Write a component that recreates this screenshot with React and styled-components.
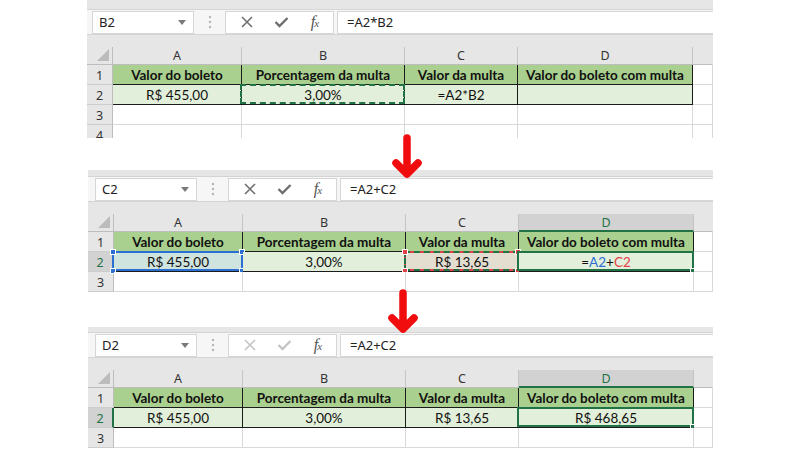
import React from "react";
import styled, { createGlobalStyle } from "styled-components";

const GlobalStyle = createGlobalStyle`
  html, body {
    margin: 0;
    padding: 0;
    background: #fff;
  }
  * {
    box-sizing: border-box;
  }
`;

const COLS = "26px 129px 163px 113px 175px 1fr";
const GREEN = "#217346";

const Page = styled.div`
  position: relative;
  width: 800px;
  height: 450px;
  overflow: hidden;
  background: #fff;
`;

const Panel = styled.div`
  margin-left: ${(p) => p.$left}px;
  margin-top: ${(p) => p.$top}px;
  width: ${(p) => 713 - p.$left}px;
  height: ${(p) => p.$height}px;
  overflow: hidden;
  background: #fff;
`;

const Band = styled.div`
  height: ${(p) => p.$h}px;
  background: #e6e6e6;
  border-bottom: 1px solid #d4d4d4;
`;

const FormulaStrip = styled.div`
  display: flex;
  align-items: center;
  height: 25px;
  padding-left: ${(p) => p.$pad}px;
  background: #f6f6f6;
  border-bottom: 1px solid #d4d4d4;
  font-family: "Noto Sans", "Open Sans", sans-serif;
  font-size: 13px;
  color: #222;
`;

const NameBox = styled.div`
  display: flex;
  align-items: center;
  justify-content: space-between;
  width: 102px;
  height: 23px;
  padding: 0 7px 0 6px;
  background: #fff;
  border: 1px solid #d6d6d6;
`;

const Dots = styled.div`
  display: flex;
  justify-content: center;
  width: 31px;
`;

const FxBox = styled.div`
  display: flex;
  align-items: center;
  justify-content: space-around;
  width: 109px;
  height: 23px;
  padding: 0 4px;
  background: #fff;
  border: 1px solid #d6d6d6;
`;

const Fx = styled.span`
  font-family: "Liberation Serif", "DejaVu Serif", serif;
  font-style: italic;
  font-size: 16px;
  line-height: 1;
  color: #555;
  letter-spacing: -1px;

  small {
    font-size: 11px;
  }
`;

const FormulaInput = styled.div`
  flex: 1;
  display: flex;
  align-items: center;
  height: 23px;
  margin-left: 3px;
  padding-left: 9px;
  background: #fff;
  border: 1px solid #d6d6d6;
  border-right: none;
`;

const HeaderGap = styled.div`
  height: 12px;
  background: #e6e6e6;
`;

const Grid = styled.div`
  display: grid;
  grid-template-columns: ${COLS};
  grid-template-rows: 18px;
  grid-auto-rows: 20px;
  font-family: Lato, "Liberation Sans", sans-serif;
`;

const Corner = styled.div`
  position: relative;
  background: #e6e6e6;
  border-right: 1px solid #bdbdbd;
  border-bottom: 1px solid #bdbdbd;
  overflow: hidden;

  &::after {
    content: "";
    position: absolute;
    right: 3px;
    bottom: 3px;
    border-style: solid;
    border-width: 0 0 12px 12px;
    border-color: transparent transparent #bcbcbc transparent;
  }
`;

const ColHead = styled.div`
  display: flex;
  align-items: center;
  justify-content: center;
  font-family: "Noto Sans", "Open Sans", sans-serif;
  font-size: 12.5px;
  color: ${(p) => (p.$active ? GREEN : "#333")};
  background: ${(p) => (p.$active ? "#d2d2d2" : "#e6e6e6")};
  border-right: 1px solid ${(p) => (p.$last ? "transparent" : "#c4c4c4")};
  border-bottom: ${(p) => (p.$active ? `2px solid ${GREEN}` : "1px solid #bdbdbd")};
`;

const RowHead = styled.div`
  display: flex;
  align-items: center;
  justify-content: center;
  padding-top: 1px;
  font-family: "Noto Sans", "Open Sans", sans-serif;
  font-size: 12.5px;
  color: ${(p) => (p.$active ? GREEN : "#333")};
  background: ${(p) => (p.$active ? "#d2d2d2" : "#e6e6e6")};
  border-right: ${(p) => (p.$active ? `2px solid ${GREEN}` : "1px solid #bdbdbd")};
  border-bottom: 1px solid #cdcdcd;
`;

const FILLS = {
  head: "#a9d08e",
  data: "#e2efda",
  blue: "#cfe3df",
  tan: "#e3ded0",
  none: "#fff",
};

const Cell = styled.div`
  position: relative;
  display: flex;
  align-items: center;
  justify-content: center;
  padding-top: 1px;
  font-size: 13.5px;
  font-weight: ${(p) => (p.$bold ? 700 : 400)};
  color: #111;
  white-space: nowrap;
  background: ${(p) => FILLS[p.$fill || "none"]};
  border-right: 1px solid ${(p) => (p.$boxed ? "#1b1b1b" : "#d9d9d9")};
  border-bottom: 1px solid ${(p) => (p.$boxed ? "#1b1b1b" : "#d9d9d9")};
`;

const Frame = styled.div`
  position: absolute;
  inset: -1px -1px 0 -2px;
  border: 2px ${(p) => p.$style || "solid"} ${(p) => p.$color};
  pointer-events: none;
`;

const Handle = styled.span`
  position: absolute;
  width: 6px;
  height: 6px;
  background: ${(p) => p.$color};
  border: 1px solid #fff;
  ${(p) => (p.$top ? "top: -3px;" : "bottom: -3px;")}
  ${(p) => (p.$left ? "left: -4px;" : "right: -3px;")}
`;

const Ref = styled.span`
  color: ${(p) => p.$color};
`;

const ArrowMark = styled.svg`
  position: absolute;
  left: ${(p) => p.$x}px;
  top: ${(p) => p.$y}px;
`;

const Caret = () => (
  <svg width="8" height="5" viewBox="0 0 8 5">
    <path d="M0 0 L8 0 L4 5 Z" fill="#7a7a7a" />
  </svg>
);

const VDots = () => (
  <svg width="4" height="14" viewBox="0 0 4 14">
    <circle cx="2" cy="2" r="1.2" fill="#b5b5b5" />
    <circle cx="2" cy="7" r="1.2" fill="#b5b5b5" />
    <circle cx="2" cy="12" r="1.2" fill="#b5b5b5" />
  </svg>
);

const Cross = ({ dim }) => (
  <svg width="12" height="12" viewBox="0 0 12 12">
    <path
      d="M1 1 L11 11 M11 1 L1 11"
      stroke={dim ? "#c4c4c4" : "#6f6f6f"}
      strokeWidth="1.6"
    />
  </svg>
);

const Check = ({ dim }) => (
  <svg width="15" height="12" viewBox="0 0 15 12">
    <path
      d="M1.5 6 L5.5 10 L13.5 2"
      fill="none"
      stroke={dim ? "#c4c4c4" : "#6f6f6f"}
      strokeWidth="2.4"
    />
  </svg>
);

const Arrow = ({ x, y }) => (
  <ArrowMark $x={x} $y={y} width="30" height="46" viewBox="0 0 30 46">
    <path
      d="M15 4 L15 40 M4 29 L15 40 L26 29"
      fill="none"
      stroke="#f10d0d"
      strokeWidth="7.5"
      strokeLinecap="round"
      strokeLinejoin="round"
    />
  </ArrowMark>
);

const Corners = ({ color }) => (
  <>
    <Handle $color={color} $top $left />
    <Handle $color={color} $top />
    <Handle $color={color} $left />
    <Handle $color={color} />
  </>
);

const FormulaBar = ({ name, formula, dim, pad }) => (
  <FormulaStrip $pad={pad}>
    <NameBox>
      <span>{name}</span>
      <Caret />
    </NameBox>
    <Dots>
      <VDots />
    </Dots>
    <FxBox>
      <Cross dim={dim} />
      <Check dim={dim} />
      <Fx>
        f<small>x</small>
      </Fx>
    </FxBox>
    <FormulaInput>{formula}</FormulaInput>
  </FormulaStrip>
);

const headers = [
  "Valor do boleto",
  "Porcentagem da multa",
  "Valor da multa",
  "Valor do boleto com multa",
];

const Sheet = ({ step }) => {
  const activeCol = step > 1;
  const rows = step === 1 ? 4 : 3;
  return (
    <Grid>
      <Corner />
      {["A", "B", "C", "D"].map((c) => (
        <ColHead key={c} $active={activeCol && c === "D"}>
          {c}
        </ColHead>
      ))}
      <ColHead $last />

      <RowHead>1</RowHead>
      {headers.map((h) => (
        <Cell key={h} $fill="head" $bold $boxed>
          {h}
        </Cell>
      ))}
      <Cell />

      <RowHead $active={activeCol}>2</RowHead>
      <Cell $fill={step === 2 ? "blue" : "data"} $boxed>
        R$ 455,00
        {step === 2 && (
          <>
            <Frame $color="#2a6fd1" />
            <Corners color="#2a6fd1" />
          </>
        )}
      </Cell>
      <Cell $fill="data" $boxed>
        3,00%
        {step === 1 && <Frame $color={GREEN} $style="dashed" />}
      </Cell>
      <Cell $fill={step === 2 ? "tan" : "data"} $boxed>
        {step === 1 ? "=A2*B2" : "R$ 13,65"}
        {step === 2 && (
          <>
            <Frame $color="#e2424a" />
            <Frame $color={GREEN} $style="dashed" />
            <Corners color="#e2424a" />
          </>
        )}
      </Cell>
      <Cell $fill="data" $boxed>
        {step === 2 && (
          <span>
            =<Ref $color="#2a6fd1">A2</Ref>+<Ref $color="#e2424a">C2</Ref>
          </span>
        )}
        {step === 3 && "R$ 468,65"}
        {step > 1 && (
          <>
            <Frame $color={GREEN} />
            <Handle $color={GREEN} />
          </>
        )}
      </Cell>
      <Cell />

      {Array.from({ length: rows - 2 }, (_, i) => (
        <React.Fragment key={i}>
          <RowHead>{i + 3}</RowHead>
          <Cell />
          <Cell />
          <Cell />
          <Cell />
          <Cell />
        </React.Fragment>
      ))}
    </Grid>
  );
};

export default function App() {
  return (
    <>
      <GlobalStyle />
      <Page>
        <Panel $left={87} $top={0} $height={138}>
          <Band $h={10} />
          <FormulaBar name="B2" formula="=A2*B2" pad={5} />
          <HeaderGap />
          <Sheet step={1} />
        </Panel>
        <Panel $left={88} $top={32} $height={122}>
          <Band $h={7} />
          <FormulaBar name="C2" formula="=A2+C2" pad={7} />
          <HeaderGap />
          <Sheet step={2} />
        </Panel>
        <Panel $left={88} $top={35} $height={121}>
          <Band $h={6} />
          <FormulaBar name="D2" formula="=A2+C2" pad={7} dim />
          <HeaderGap />
          <Sheet step={3} />
        </Panel>
        <Arrow x={392} y={134} />
        <Arrow x={388} y={289} />
      </Page>
    </>
  );
}
